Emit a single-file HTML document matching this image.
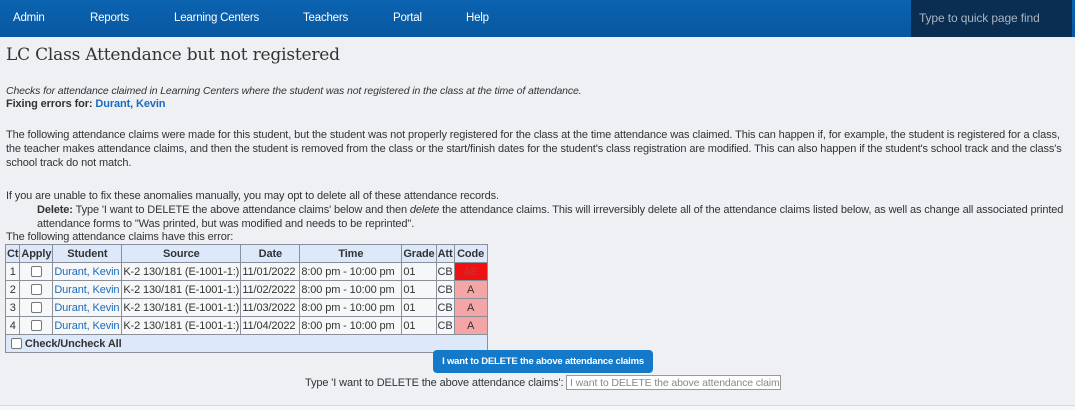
<!DOCTYPE html>
<html><head><style>
body{margin:0;width:1075px;height:410px;overflow:hidden;background:#eef0f4;font-family:"Liberation Sans",Arial,sans-serif;font-size:11px;letter-spacing:-0.12px;color:#333;position:relative}
.nav{position:absolute;left:0;top:0;width:1075px;height:37px;background:linear-gradient(#0b63b0,#0857a0)}
.nav span{position:absolute;top:12px;color:#fff;font-size:11.5px;letter-spacing:-0.2px}
.search{position:absolute;left:911px;top:0;width:161px;height:37px;background:#0a2d52;color:#aab4c2;font-size:12px;line-height:37px;padding-left:8px;box-sizing:border-box}
.t{position:absolute;white-space:nowrap}
a{color:#1a6bbf;text-decoration:none}
h1{position:absolute;left:6px;top:45px;margin:0;font-family:"DejaVu Serif","Liberation Serif",serif;font-weight:normal;font-size:17px;color:#333;letter-spacing:-0.2px}
table{position:absolute;left:5px;top:244px;border-collapse:collapse;font-size:11px}
td,th{border:1px solid #8a9099;height:17px;padding:0 1px;white-space:nowrap}
th{background:#dde9fa;font-weight:bold;color:#333}
tr.r td{background:#f6f7f9}
.cb{display:inline-block;width:9px;height:9px;border:1px solid #777;border-radius:2px;background:#fff;vertical-align:middle}
.btn{position:absolute;left:433px;top:350px;width:220px;height:23px;background:#1479c8;border-radius:4px;color:#fff;font-weight:bold;font-size:9.5px;letter-spacing:-0.2px;text-align:center;line-height:23px;white-space:nowrap}
.inp{position:absolute;left:566px;top:375px;height:15px;border:1px solid #999;background:#fff;color:#888;font-size:10.5px;line-height:14px;padding-left:3px;box-sizing:border-box;width:215px;overflow:hidden;white-space:nowrap}
</style></head><body>
<div class="nav"><span style="left:13px">Admin</span><span style="left:90px">Reports</span><span style="left:174px">Learning Centers</span><span style="left:303px">Teachers</span><span style="left:393px">Portal</span><span style="left:466px">Help</span></div>
<div class="search">Type to quick page find</div>
<h1>LC Class Attendance but not registered</h1>
<div class="t" style="left:6px;top:85px;font-style:italic;font-size:10.5px">Checks for attendance claimed in Learning Centers where the student was not registered in the class at the time of attendance.</div>
<div class="t" style="left:6px;top:98px;font-weight:bold">Fixing errors for: <a>Durant, Kevin</a></div>
<div class="t" style="left:6px;top:129px">The following attendance claims were made for this student, but the student was not properly registered for the class at the time attendance was claimed. This can happen if, for example, the student is registered for a class,</div>
<div class="t" style="left:6px;top:143px">the teacher makes attendance claims, and then the student is removed from the class or the start/finish dates for the student's class registration are modified. This can also happen if the student's school track and the class's</div>
<div class="t" style="left:6px;top:157px">school track do not match.</div>
<div class="t" style="left:6px;top:190px">If you are unable to fix these anomalies manually, you may opt to delete all of these attendance records.</div>
<div class="t" style="left:37px;top:204px"><b>Delete:</b> Type 'I want to DELETE the above attendance claims' below and then <i>delete</i> the attendance claims. This will irreversibly delete all of the attendance claims listed below, as well as change all associated printed</div>
<div class="t" style="left:37px;top:218px">attendance forms to "Was printed, but was modified and needs to be reprinted".</div>
<div class="t" style="left:6px;top:231px">The following attendance claims have this error:</div>
<table>
<tr><th>Ct</th><th>Apply</th><th style="width:66px">Student</th><th style="width:116px">Source</th><th style="width:56px">Date</th><th style="width:99px">Time</th><th>Grade</th><th>Att</th><th style="width:30px">Code</th></tr>
<tr class="r"><td style="text-align:center">1</td><td style="text-align:center"><span class="cb"></span></td><td><a>Durant, Kevin</a></td><td>K-2 130/181 (E-1001-1:)</td><td>11/01/2022</td><td>8:00 pm - 10:00 pm</td><td>01</td><td>CB</td><td style="background:#ee1111;color:#c33;text-align:center">AE</td></tr>
<tr class="r"><td style="text-align:center">2</td><td style="text-align:center"><span class="cb"></span></td><td><a>Durant, Kevin</a></td><td>K-2 130/181 (E-1001-1:)</td><td>11/02/2022</td><td>8:00 pm - 10:00 pm</td><td>01</td><td>CB</td><td style="background:#f4a6a6;text-align:center">A</td></tr>
<tr class="r"><td style="text-align:center">3</td><td style="text-align:center"><span class="cb"></span></td><td><a>Durant, Kevin</a></td><td>K-2 130/181 (E-1001-1:)</td><td>11/03/2022</td><td>8:00 pm - 10:00 pm</td><td>01</td><td>CB</td><td style="background:#f4a6a6;text-align:center">A</td></tr>
<tr class="r"><td style="text-align:center">4</td><td style="text-align:center"><span class="cb"></span></td><td><a>Durant, Kevin</a></td><td>K-2 130/181 (E-1001-1:)</td><td>11/04/2022</td><td>8:00 pm - 10:00 pm</td><td>01</td><td>CB</td><td style="background:#f4a6a6;text-align:center">A</td></tr>
<tr><th colspan="9" style="text-align:left;padding-left:5px"><span class="cb"></span> Check/Uncheck All</th></tr>
</table>
<div class="btn">I want to DELETE the above attendance claims</div>
<div class="t" style="left:305px;top:377px;font-size:11px">Type 'I want to DELETE the above attendance claims':</div>
<div class="inp">I want to DELETE the above attendance claim</div>
<div style="position:absolute;left:0;top:405px;width:1075px;height:1px;background:#d4d8de"></div>
<div style="position:absolute;left:0;top:406px;width:1075px;height:4px;background:#f6f7f9"></div>
</body></html>
